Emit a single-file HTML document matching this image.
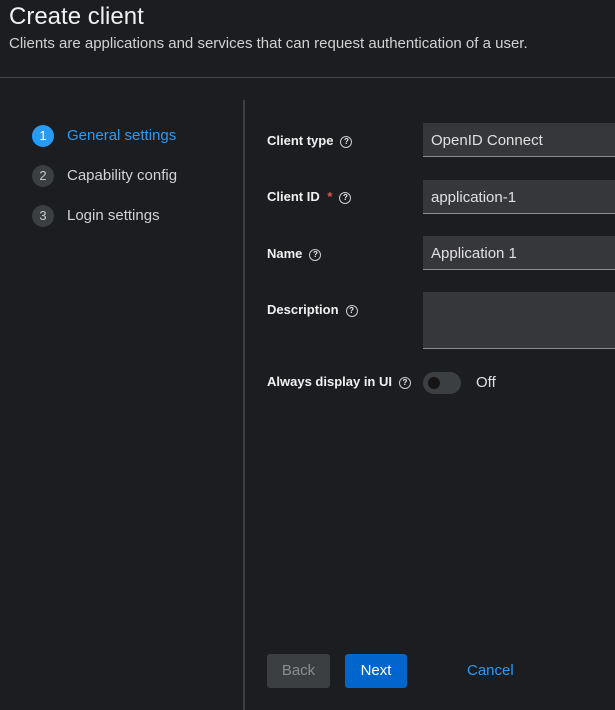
<!DOCTYPE html>
<html><head><style>
body{margin:0;width:615px;height:710px;background:#1b1d21;font-family:"Liberation Sans",sans-serif;color:#e0e0e0;position:relative;overflow:hidden}
.a{position:absolute}
h1{position:absolute;left:9px;top:3px;margin:0;font-size:24px;font-weight:normal;color:#f0f0f0}
.sub{left:9px;top:35px;font-size:15px;color:#d2d2d2}
.hr{left:0;top:77px;width:615px;height:1px;background:#444548}
.vr{left:243px;top:100px;width:2px;height:610px;background:#3c3f42}
.step{left:32px;font-size:15px;color:#d2d2d2}
.num{display:inline-block;width:22px;height:22px;border-radius:50%;background:#3c3f42;color:#c8c8c8;font-size:13px;text-align:center;line-height:22px;margin-right:13px;vertical-align:middle}
.lbl{left:267px;font-size:13px;font-weight:bold;color:#f0f0f0}
.q{display:inline-block;width:10px;height:10px;border:1.3px solid #ccc;border-radius:50%;font-size:8px;line-height:10px;text-align:center;margin-left:7px;vertical-align:middle;font-weight:bold}
.inp{left:423px;width:200px;background:#36373b;border-bottom:1px solid #8a8d90;box-sizing:border-box;font-size:15px;color:#e0e0e0;padding-left:8px}
.btn{top:654px;height:34px;border-radius:3px;font-size:15px;text-align:center;line-height:34px}
</style></head><body>
<h1>Create client</h1>
<div class="a sub">Clients are applications and services that can request authentication of a user.</div>
<div class="a hr"></div>
<div class="a vr"></div>
<div class="a step" style="top:125px;color:#2b9af3"><span class="num" style="background:#2b9af3;color:#fff">1</span>General settings</div>
<div class="a step" style="top:165px"><span class="num">2</span>Capability config</div>
<div class="a step" style="top:205px"><span class="num">3</span>Login settings</div>

<div class="a lbl" style="top:133px">Client type<span class="q">?</span></div>
<div class="a lbl" style="top:189px">Client ID <span style="color:#e0524d;margin-left:4px">*</span><span class="q">?</span></div>
<div class="a lbl" style="top:246px">Name<span class="q">?</span></div>
<div class="a lbl" style="top:302px">Description<span class="q">?</span></div>
<div class="a lbl" style="top:374px">Always display in UI<span class="q">?</span></div>

<div class="a inp" style="top:123px;height:34px;line-height:35px">OpenID Connect</div>
<div class="a inp" style="top:180px;height:34px;line-height:35px">application-1</div>
<div class="a inp" style="top:236px;height:34px;line-height:35px">Application 1</div>
<div class="a inp" style="top:292px;height:57px"></div>
<div class="a" style="left:423px;top:372px;width:38px;height:22px;border-radius:11px;background:#3c3f42"></div>
<div class="a" style="left:428px;top:377px;width:12px;height:12px;border-radius:50%;background:#151515"></div>
<div class="a" style="left:476px;top:374px;font-size:15px;color:#e0e0e0">Off</div>

<div class="a btn" style="left:267px;width:63px;background:#3c3f42;color:#8a8d90">Back</div>
<div class="a btn" style="left:345px;width:62px;background:#0066cc;color:#fff">Next</div>
<div class="a btn" style="left:467px;color:#2b9af3">Cancel</div>
</body></html>
